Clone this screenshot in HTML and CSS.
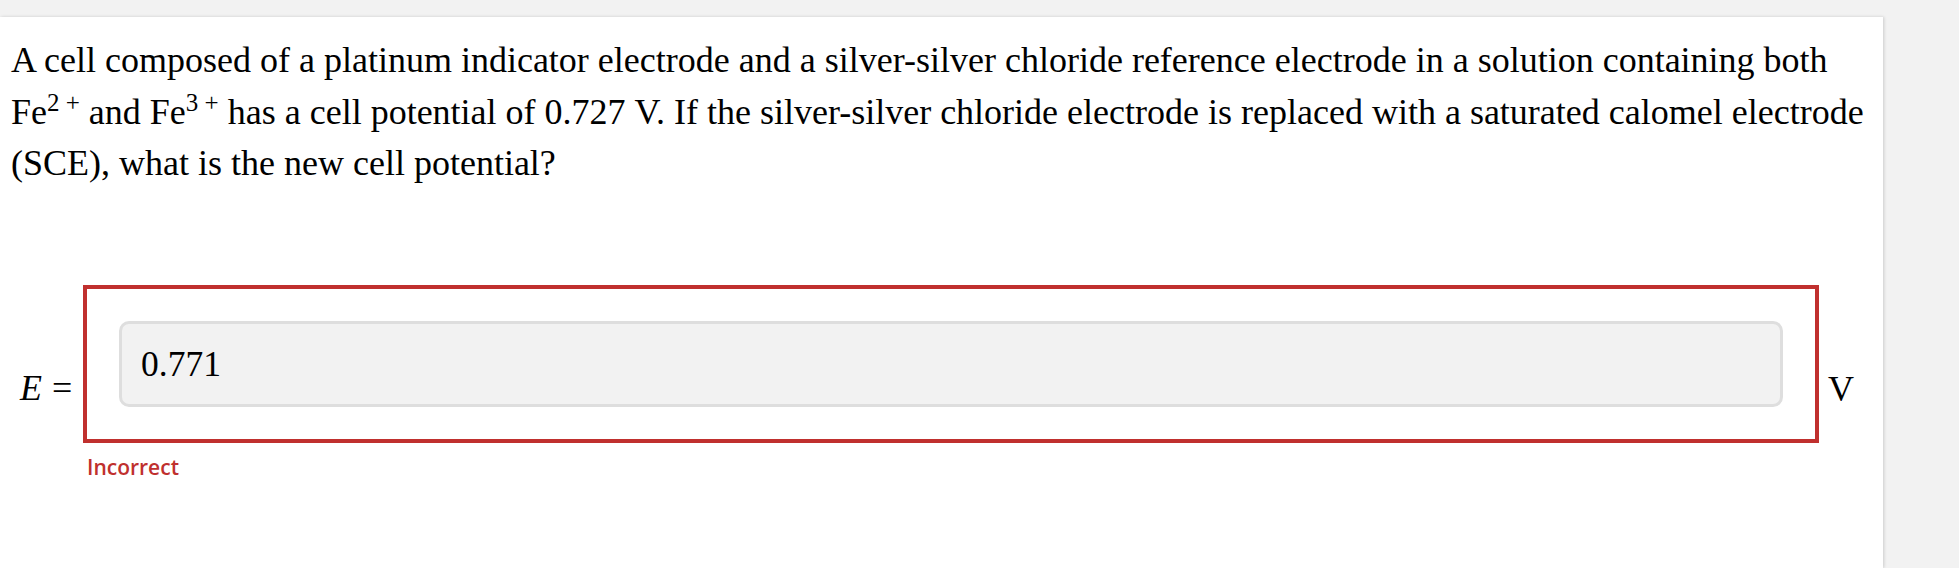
FILE: index.html
```html
<!DOCTYPE html>
<html>
<head>
<meta charset="utf-8">
<link rel="stylesheet" href="styles.css">
</head>
<body>
<div class="page">
  <div class="question">
    <p class="prompt">A cell composed of a platinum indicator electrode and a silver-silver chloride reference electrode in a solution containing both Fe<sup>2&nbsp;+</sup> and Fe<sup>3&nbsp;+</sup> has a cell potential of 0.727&nbsp;V. If the silver-silver chloride electrode is replaced with a saturated calomel electrode (SCE), what is the new cell potential?</p>
  </div>
  <div class="answer-row">
    <div class="label"><span class="var">E</span><span class="eq">=</span></div>
    <div class="field">
      <div class="box">
        <div class="input">0.771</div>
      </div>
      <div class="status">Incorrect</div>
    </div>
    <div class="unit">V</div>
  </div>
</div>
</body>
</html>
```
FILE: styles.css
```css
html, body {
  margin: 0;
  padding: 0;
  background: #f2f2f2;
  height: 100%;
}
.page {
  margin-top: 17px;
  width: 1883px;
  height: 551px;
  background: #ffffff;
  box-shadow: 1px 0 3px rgba(0, 0, 0, 0.16);
  overflow: hidden;
}
.question {
  padding: 18px 18px 0 11px;
}
.prompt {
  margin: 0;
  font-family: "Liberation Serif", "Times New Roman", serif;
  font-size: 36px;
  line-height: 51.7px;
  color: #000;
}
.prompt sup {
  font-size: 25px;
  line-height: 0;
  vertical-align: 13px;
}
.answer-row {
  display: flex;
  align-items: flex-start;
  margin-top: 95px;
}
.label {
  width: 83px;
  flex: none;
  box-sizing: border-box;
  padding: 83px 0 0 20px;
  font-family: "Liberation Serif", "Times New Roman", serif;
  font-size: 36px;
  line-height: 40px;
  display: flex;
  gap: 10px;
}
.var { font-style: italic; }
.field {
  width: 1736px;
  flex: none;
  display: flex;
  flex-direction: column;
}
.box {
  border: 4px solid #c0302e;
  padding: 32px;
}
.input {
  height: 80px;
  border: 3px solid #dedede;
  border-radius: 10px;
  background: #f2f2f2;
  padding: 0 19px;
  font-family: "Liberation Serif", "Times New Roman", serif;
  font-size: 35.5px;
  line-height: 80px;
  color: #000;
}
.status {
  margin-top: 10px;
  padding-left: 4px;
  font-family: "Open Sans", "Noto Sans", sans-serif;
  font-weight: 600;
  font-size: 21px;
  line-height: 29px;
  color: #c0302e;
}
.unit {
  flex: none;
  padding: 84px 0 0 9px;
  font-family: "Liberation Serif", "Times New Roman", serif;
  font-size: 36px;
  line-height: 40px;
}
```
